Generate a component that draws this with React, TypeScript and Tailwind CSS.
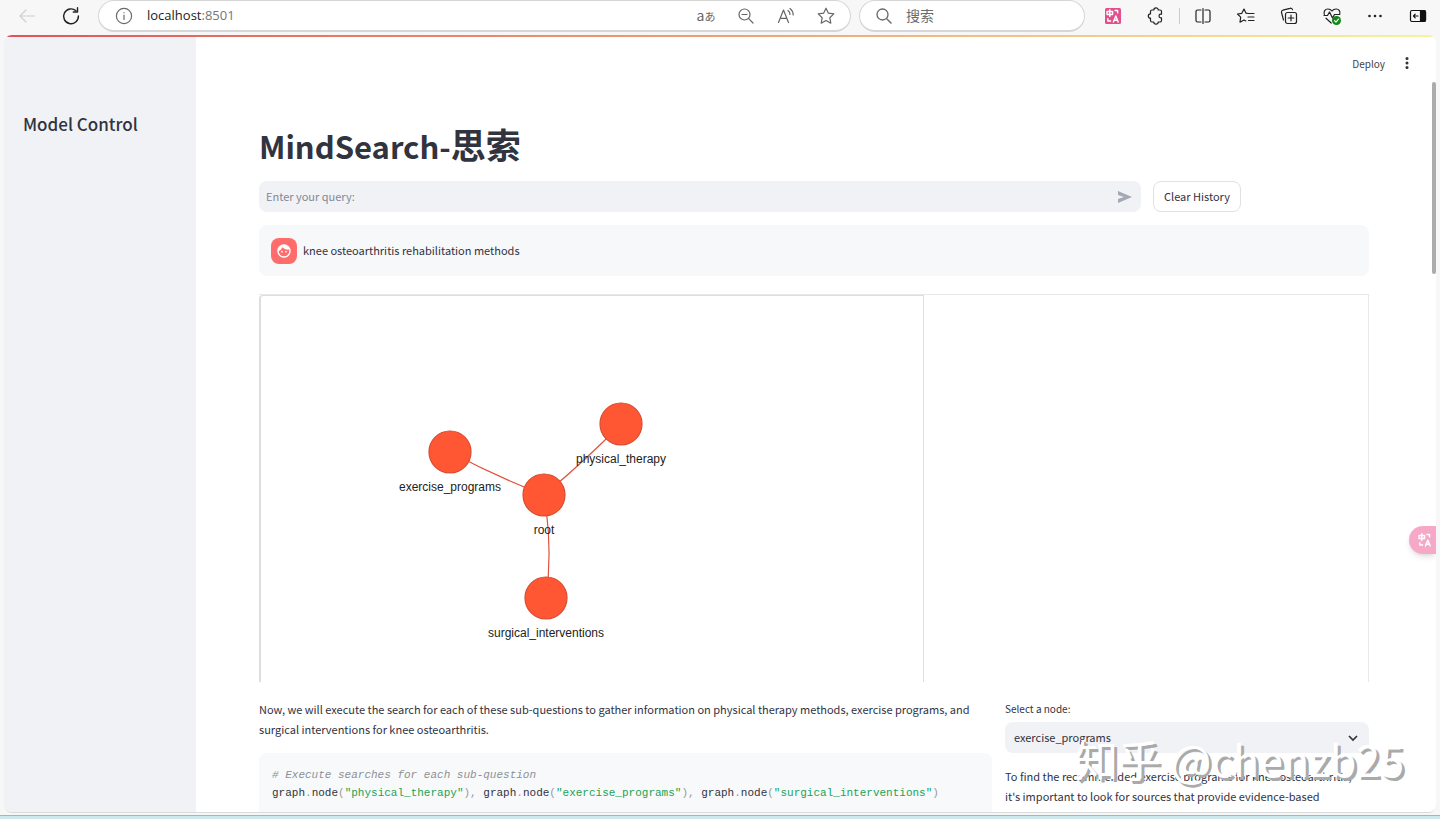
import type { ReactNode } from "react";

const sans = "font-['Noto_Sans_CJK_SC',sans-serif]";

type IconProps = { children: ReactNode; label: string; className?: string };

function ToolButton({ children, label, className = "text-[#333]" }: IconProps) {
  return (
    <button type="button" aria-label={label} className={`flex h-5 w-5 shrink-0 items-center justify-center ${className}`}>
      <svg viewBox="0 0 20 20" className="h-5 w-5" fill="none" stroke="currentColor" strokeWidth="1.2" strokeLinecap="round" strokeLinejoin="round">
        {children}
      </svg>
    </button>
  );
}

function TranslateGlyph() {
  return (
    <g fill="none" stroke="#fff" strokeWidth="1.4" strokeLinecap="round" strokeLinejoin="round">
      <path d="M4 5.5h5.6v3H4zM6.8 3.8v6.6" />
      <path d="M10.4 16l2.4-6 2.4 6M11.2 14.2h3.2" />
      <path d="M12 4.5h2.6v2.4M4.8 12.6V15h2.8" />
    </g>
  );
}

function BrowserBar() {
  return (
    <header className="flex h-[35px] shrink-0 items-start bg-[#f7f7f7] pl-[17px] pr-3">
      <div className="flex h-8 items-center gap-6">
        <ToolButton label="Back" className="text-[#cfcfcf]"><path d="M17.500 10H3M9 4L3 10l6 6" /></ToolButton>
        <ToolButton label="Refresh" className="text-[#222]">
          <path d="M15 4.800A7.400 7.400 0 1 0 17.400 10" strokeWidth="1.400" />
          <path d="M16.500 1.800v4.200h-4.200" strokeWidth="1.400" />
        </ToolButton>
      </div>
      <div className="ml-[17px] flex h-8 min-w-0 flex-1 items-center rounded-full border border-b-2 border-[#d6d6d6] bg-white pl-[15px] pr-[14px]">
        <ToolButton label="Site information" className="text-[#6b6b6b]">
          <circle cx="10" cy="10" r="7.600" /><path d="M10 9v4.500M10 6.500v.2" />
        </ToolButton>
        <span className="ml-[13px] flex-1 font-['Open_Sans',sans-serif] text-[13px] text-[#1b1b1b]">localhost<span className="text-[#767676]">:8501</span></span>
        <div className="flex items-center gap-5">
          <button type="button" aria-label="Show translate options" className={`${sans} w-5 whitespace-nowrap text-[14px] leading-5 text-[#666]`}>a<span className="text-[11px]">あ</span></button>
          <ToolButton label="Zoom out" className="text-[#666]"><circle cx="8.500" cy="8.500" r="5.500" /><path d="M12.700 12.700L17 17M6 8.500h5" /></ToolButton>
          <ToolButton label="Read aloud" className="text-[#666]"><path d="M2.500 16.500L7.500 4l5 12.500M4.200 12.300h6.600M12 4.500q2 1.500 2 4M14 2.500q3.200 2.400 3.200 6.500" /></ToolButton>
          <ToolButton label="Add to favourites" className="text-[#666]"><path d="M10 2.200l2.400 5 5.400.7-4 3.800 1 5.500-4.800-2.700-4.800 2.700 1-5.500-4-3.800 5.400-.7z" /></ToolButton>
        </div>
      </div>
      <label className="ml-2 flex h-8 w-[226px] shrink-0 items-center rounded-full border border-b-2 border-[#d6d6d6] bg-white pl-[14px] pr-4">
        <svg viewBox="0 0 20 20" className="h-5 w-5 shrink-0" fill="none" stroke="#666" strokeWidth="1.300"><circle cx="8.500" cy="8.500" r="5.500" /><path d="M12.700 12.700L17.500 17.500" /></svg>
        <input aria-label="搜索" placeholder="搜索" className={`${sans} mb-0.5 ml-3 w-full min-w-0 bg-transparent text-sm leading-5 outline-none placeholder:text-[#6b6b6b]`} />
      </label>
      <div className="ml-[18px] flex h-8 items-center gap-[23px] text-[#222]">
        <button type="button" aria-label="Translate" className="flex h-5 w-5 items-center justify-center">
          <svg viewBox="0 0 20 20" className="h-5 w-5"><rect x="2" y="2" width="16" height="16" rx="1.500" fill="#e0508c" /><TranslateGlyph /></svg>
        </button>
        <div className="flex items-center gap-[13px]">
          <ToolButton label="Extensions" className="text-[#222]">
            <path d="M4.500 5.500a1.500 1.500 0 0 1 1.500-1.500h1.800a2.200 2.200 0 0 1 4.400 0H14a1.500 1.500 0 0 1 1.500 1.500v2.700h-.7a1.800 1.800 0 0 0 0 3.600h.7v2.700A1.500 1.500 0 0 1 14 16h-1.800a2.200 2.200 0 0 1-4.400 0H6a1.500 1.500 0 0 1-1.500-1.500v-2.300a2.200 2.200 0 0 1 0-4.400z" />
          </ToolButton>
          <span className="h-4 w-px bg-[#ccc]" />
          <ToolButton label="Split screen" className="text-[#222]"><path d="M8 4H4.500A1.500 1.500 0 0 0 3 5.500v9A1.500 1.500 0 0 0 4.500 16H8M12 4h3.500A1.500 1.500 0 0 1 17 5.500v9a1.500 1.500 0 0 1-1.500 1.500H12M10 2.500v15" /></ToolButton>
        </div>
        <ToolButton label="Favourites" className="text-[#222]"><path d="M12.500 7.500L10 7.200 8 3 5.800 7.300 1.500 8l3.200 3.200L4 16.200l4-2.300 1.800 1M12.500 7.500H18M12 11h6M12.500 14.500H18" /></ToolButton>
        <ToolButton label="Collections" className="text-[#222]">
          <rect x="6.500" y="6.500" width="11" height="11" rx="2" /><path d="M12 9.200v5.600M9.200 12h5.600M4.500 14L2.500 6.500a2 2 0 0 1 1.300-2.300L11 2.300a2 2 0 0 1 2.500 1.400" />
        </ToolButton>
        <ToolButton label="Browser essentials" className="text-[#222]">
          <path d="M2.300 8.500C1.400 5.500 3 3 5.800 3 8 3 9.300 4 10 5c.7-1 2-2 4.200-2C17 3 18.600 5.500 17.700 8.500M2 9.500h3.500L7.500 6l3 6 2-3.500H17M4 12.200l5.200 4.800" />
          <circle cx="14.500" cy="14.500" r="4.500" fill="#13861a" stroke="none" /><path d="M12.500 14.600l1.500 1.500 2.500-3" stroke="#fff" />
        </ToolButton>
        <ToolButton label="Settings and more" className="text-[#222]"><g fill="currentColor" stroke="none"><circle cx="4.500" cy="10" r="1.300" /><circle cx="10" cy="10" r="1.300" /><circle cx="15.500" cy="10" r="1.300" /></g></ToolButton>
        <ToolButton label="Sidebar" className="text-[#111]">
          <rect x="2.500" y="4.500" width="15" height="11" rx="1.500" /><path d="M12.500 4.500H16a1.500 1.500 0 0 1 1.500 1.500v8a1.500 1.500 0 0 1-1.500 1.500h-3.500z" fill="currentColor" /><path d="M10 10H5.500M7.200 8.200L5.500 10l1.700 1.800" />
        </ToolButton>
      </div>
    </header>
  );
}

const nodes = [
  { label: "exercise_programs", x: 189, y: 156 },
  { label: "physical_therapy", x: 360, y: 128 },
  { label: "root", x: 283, y: 199 },
  { label: "surgical_interventions", x: 285, y: 302 },
];

function SearchGraph() {
  return (
    <div className="flex h-[388px] border-r border-t border-[#e8e8e8]">
      <div className="w-3/5 rounded-tl-sm border-l-2 border-r border-t border-[#dedede]">
        <svg viewBox="0 0 662 386" className="h-[386px] w-[662px] max-w-full" role="img" aria-label="Search graph">
          <g fill="none" stroke="#e0523c" strokeWidth="1.200">
            <path d="M189 156Q234 180 283 199" />
            <path d="M360 128Q324 165 283 199" />
            <path d="M283 199Q292 251 285 302" />
          </g>
          {nodes.map((n) => (
            <g key={n.label}>
              <circle cx={n.x} cy={n.y} r="21" fill="#ff5733" stroke="#d84a30" strokeWidth="1.200" />
              <text x={n.x} y={n.y + 39} textAnchor="middle" className="fill-[#222] font-['Liberation_Sans',sans-serif] text-[12px]">{n.label}</text>
            </g>
          ))}
        </svg>
      </div>
    </div>
  );
}

function Call({ name }: { name: string }) {
  return (
    <>
      graph<i className="not-italic text-[#999]">.</i>node<i className="not-italic text-[#999]">(</i>
      <span className="text-[#21a353]">"{name}"</span>
      <i className="not-italic text-[#999]">)</i>
    </>
  );
}

function MainArea() {
  return (
    <main className="flex min-w-0 flex-1 flex-col overflow-hidden bg-white">
      <div className="flex h-[52px] shrink-0 items-center justify-end gap-3 pr-[19px]">
        <button type="button" className="text-[10px] text-[#444]">Deploy</button>
        <button type="button" aria-label="Main menu" className="flex h-5 w-5 items-center justify-center">
          <svg viewBox="0 0 20 20" className="h-5 w-5 fill-[#31333f]"><circle cx="10" cy="5.500" r="1.500" /><circle cx="10" cy="10" r="1.500" /><circle cx="10" cy="14.500" r="1.500" /></svg>
        </button>
      </div>
      <div className="flex flex-col pl-[63px] pr-[67px] pt-[33px]">
        <h1 className="text-[31px] font-bold leading-[44px] text-[#31333f]">MindSearch-<span className="text-[35px]">思索</span></h1>
        <div className="mt-[13px] grid grid-cols-[882fr_216fr] gap-3">
          <form className="flex h-[31px] items-center rounded-lg bg-[#f0f2f6] pl-[7px] pr-2" onSubmit={(e) => e.preventDefault()}>
            <input aria-label="Enter your query:" placeholder="Enter your query:" className="mb-0.5 min-w-0 flex-1 bg-transparent text-[11px] leading-4 outline-none placeholder:text-[#858792]" />
            <button type="submit" aria-label="Send"><svg viewBox="0 0 16 14" className="h-[14px] w-4 fill-[#a3a8b4]"><path d="M1 1l14 6-14 6V9l6-2-6-2z" /></svg></button>
          </form>
          <button type="button" className="h-[31px] w-[88px] rounded-lg border border-[#e0e1e5] bg-white pb-px text-[11px] leading-4 text-[#31333f]">Clear History</button>
        </div>
        <div className="mt-[13px] flex h-[51px] items-center gap-[6px] rounded-lg bg-[#f7f8fa] px-3">
          <span className="flex h-[26px] w-[26px] items-center justify-center rounded-lg bg-[#ff6c6c]">
            <svg viewBox="0 0 24 24" className="h-4 w-4 fill-white"><path d="M10.250 13a1.250 1.250 0 1 1-2.500 0 1.250 1.250 0 0 1 2.500 0zM15 11.750a1.250 1.250 0 1 0 0 2.500 1.250 1.250 0 0 0 0-2.500zM22 12c0 5.520-4.480 10-10 10S2 17.520 2 12 6.480 2 12 2s10 4.480 10 10zm-2 0c0-.78-.12-1.530-.33-2.240-.7.150-1.420.240-2.170.240a9.970 9.970 0 0 1-7.760-3.690A10.020 10.020 0 0 1 4 11.860c.01.040 0 .090 0 .140 0 4.410 3.590 8 8 8s8-3.590 8-8z" /></svg>
          </span>
          <p className="pb-0.5 text-[11px] leading-5 text-[#31333f]">knee osteoarthritis rehabilitation methods</p>
        </div>
        <div className="mt-[18px]"><SearchGraph /></div>
        <div className="mt-[17px] grid grid-cols-[733fr_364fr] gap-[13px] text-[11px] leading-5 text-[#31333f]">
          <section className="min-w-0">
            <p>Now, we will execute the search for each of these sub-questions to gather information on physical therapy methods, exercise programs, and surgical interventions for knee osteoarthritis.</p>
            <pre className="mt-[14px] overflow-hidden rounded-lg bg-[#f8f9fb] p-[13px] font-['Liberation_Mono',monospace] text-[11px] leading-[18px]">
              <code><i className="text-[#8d9096]"># Execute searches for each sub-question</i>{"\n"}<Call name="physical_therapy" /><span className="text-[#999]">,</span> <Call name="exercise_programs" /><span className="text-[#999]">,</span> <Call name="surgical_interventions" />{"\n\n"}</code>
            </pre>
          </section>
          <section className="min-w-0">
            <label htmlFor="node" className="block text-[10px] leading-5">Select a node:</label>
            <div className="mt-[3px] flex h-[31px] items-center rounded-lg bg-[#f0f2f6] pr-2">
              <select id="node" defaultValue="exercise_programs" className="h-full min-w-0 flex-1 appearance-none bg-transparent pb-0.5 pl-[9px] outline-none">
                {nodes.map((n) => <option key={n.label}>{n.label}</option>)}
              </select>
              <svg viewBox="0 0 16 16" className="pointer-events-none h-4 w-4" fill="none" stroke="#31333f" strokeWidth="1.700"><path d="M4 6l4 4 4-4" /></svg>
            </div>
            <p className="mt-[13px]">To find the recommended exercise programs for knee osteoarthritis, it's important to look for sources that provide evidence-based</p>
          </section>
        </div>
      </div>
    </main>
  );
}

export default function App() {
  return (
    <div className={`${sans} relative flex h-screen flex-col overflow-hidden bg-[#f7f7f7]`}>
      <BrowserBar />
      <div className="relative mx-1 flex min-h-0 flex-1 flex-col overflow-hidden rounded-lg border-b border-[#d9dcdc]">
        <div className="h-[2px] shrink-0 bg-linear-to-r from-[#e0525a] via-[#eda070] to-[#f5f3a0]" />
        <div className="flex min-h-0 flex-1">
          <aside className="w-48 shrink-0 bg-[#f0f2f6] pl-[19px] pt-[75px]">
            <h2 className="text-[17px] font-medium leading-6 text-[#31333f]">Model Control</h2>
          </aside>
          <MainArea />
        </div>
        <div className="absolute right-0 top-[47px] h-48 w-1 rounded-sm bg-[#acacac]" />
        <button type="button" aria-label="Translate page" className="absolute right-0 top-[491px] flex h-7 w-[27px] items-center justify-center rounded-l-full bg-[#f6a9c6] pl-1 shadow-md">
          <svg viewBox="0 0 20 20" className="h-5 w-5"><TranslateGlyph /></svg>
        </button>
      </div>
      <div className="mt-[2px] h-1 shrink-0 border-t border-[#aab4b5] bg-[#cde8ec]" />
      <div className="pointer-events-none absolute bottom-8 right-9 whitespace-nowrap text-[43px] leading-[58px] text-white [text-shadow:3px_3px_0_#aaa]">知乎 @chenzb25</div>
    </div>
  );
}
